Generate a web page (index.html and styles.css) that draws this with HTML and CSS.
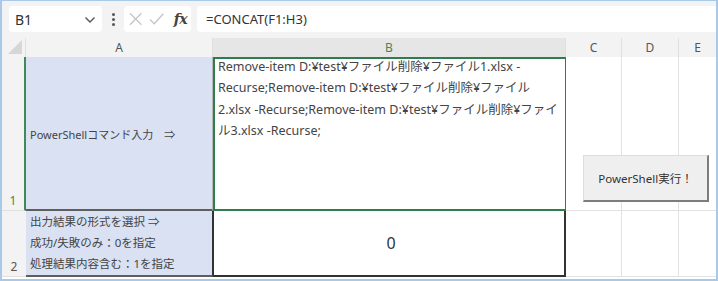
FILE: index.html
```html
<!DOCTYPE html>
<html lang="ja">
<head>
<meta charset="utf-8">
<link rel="stylesheet" href="styles.css">
</head>
<body>
<div class="frame">
  <div class="toolbar">
    <div class="namebox">
      <span class="ref">B1</span>
      <svg class="chev" width="12" height="8" viewBox="0 0 12 8"><path d="M1.5 1.5 L6 6 L10.5 1.5" fill="none" stroke="#555" stroke-width="1.4"/></svg>
    </div>
    <div class="dots"><i></i><i></i><i></i></div>
    <div class="iconbox">
      <svg width="14" height="14" viewBox="0 0 14 14"><path d="M1 1 L13 13 M13 1 L1 13" stroke="#c4c4c4" stroke-width="1.3" fill="none"/></svg>
      <svg width="16" height="14" viewBox="0 0 16 14"><path d="M1 7.5 L5.5 12 L15 1.5" stroke="#c4c4c4" stroke-width="1.3" fill="none"/></svg>
      <span class="fx">fx</span>
    </div>
    <div class="formula">=CONCAT(F1:H3)</div>
  </div>
  <div class="sheet">
    <div class="corner"><svg width="14" height="14" viewBox="0 0 14 14"><path d="M14 0 L14 14 L0 14 Z" fill="#d6d6d6"/></svg></div>
    <div class="colh">A</div>
    <div class="colh sel">B</div>
    <div class="colh">C</div>
    <div class="colh">D</div>
    <div class="colh last">E</div>

    <div class="rowh sel">1</div>
    <div class="cell a a1">PowerShellコマンド入力　⇒</div>
    <div class="cell b1"><div class="b1text">Remove-item D:¥test¥ファイル削除¥ファイル1.xlsx -<br>Recurse;Remove-item D:¥test¥ファイル削除¥ファイル<br>2.xlsx -Recurse;Remove-item D:¥test¥ファイル削除¥ファイ<br>ル3.xlsx -Recurse;</div></div>
    <div class="cell"></div>
    <div class="cell"></div>
    <div class="cell last"></div>

    <div class="rowh">2</div>
    <div class="cell a a2">出力結果の形式を選択 ⇒<br>成功/失敗のみ：0を指定<br>処理結果内容含む：1を指定</div>
    <div class="cell b2">0</div>
    <div class="cell"></div>
    <div class="cell"></div>
    <div class="cell last"></div>

    <button class="runbtn">PowerShell実行！</button>
  </div>
</div>
</body>
</html>
```
FILE: styles.css
```css
* { box-sizing: border-box; }
html, body { margin: 0; padding: 0; }
body {
  width: 718px;
  height: 281px;
  overflow: hidden;
  font-family: "Noto Sans", "Noto Sans CJK JP", sans-serif;
  color: #333;
}
.frame {
  width: 718px;
  height: 281px;
  border: 2px solid #a9c9e9;
  border-top-width: 1px;
  background: #f3f3f3;
  display: flex;
  flex-direction: column;
}
.toolbar {
  height: 37px;
  display: flex;
  align-items: flex-start;
  padding: 5px 0 0 7px;
}
.namebox {
  width: 93px;
  height: 26px;
  background: #fff;
  border-radius: 4px;
  display: flex;
  align-items: center;
  justify-content: space-between;
  padding: 0 6px;
}
.ref { font-size: 14px; color: #333; padding-top: 1px; }
.chev { margin-top: 1px; }
.dots {
  width: 22px;
  height: 26px;
  display: flex;
  flex-direction: column;
  align-items: center;
  justify-content: center;
  gap: 2px;
}
.dots i {
  display: block;
  width: 3px;
  height: 3px;
  border-radius: 50%;
  background: #555;
}
.iconbox {
  width: 67px;
  height: 26px;
  background: #fff;
  border-radius: 4px;
  display: flex;
  align-items: center;
  padding: 0 4px 0 5px;
  gap: 7px;
}
.fx {
  font-family: "DejaVu Serif", "Liberation Serif", serif;
  font-style: italic;
  font-weight: bold;
  font-size: 14px;
  color: #444;
  margin-left: 2px;
  letter-spacing: -0.5px;
}
.formula {
  flex: 1;
  height: 26px;
  margin-left: 6px;
  background: #fff;
  border-radius: 4px 0 0 4px;
  font-size: 13px;
  line-height: 27px;
  padding-left: 9px;
  color: #333;
}
.sheet {
  position: relative;
  flex: 1;
  display: grid;
  grid-template-columns: 24px 187px 353px 56px 57px 1fr;
  grid-template-rows: 19px 154px 66px 1fr;
  background: #fff;
}
.corner {
  background: #f3f3f3;
  display: flex;
  align-items: flex-end;
  justify-content: flex-end;
  padding: 0 3px 3px 0;
  border-right: 1px solid #e0e0e0;
}
.colh {
  background: #f3f3f3;
  font-size: 12px;
  color: #555;
  text-align: center;
  line-height: 19px;
  border-right: 1px solid #e0e0e0;
}
.colh.sel { background: #e6e6e6; color: #3e8a5a; }
.colh.last { border-right: none; }
.rowh {
  background: #f3f3f3;
  font-size: 12px;
  color: #555;
  display: flex;
  align-items: flex-end;
  justify-content: center;
  padding-bottom: 1px;
  border-bottom: 1px solid #e0e0e0;
}
.rowh.sel { color: #3e8a5a; border-right: 2px solid #3e8a5a; }
.cell {
  border-right: 1px solid #e2e2e2;
  border-bottom: 1px solid #e2e2e2;
  font-size: 12.5px;
}
.cell.last { border-right: none; }
.a { background: #d9e1f2; color: #444; }
.a1 {
  display: flex;
  align-items: center;
  font-size: 11px;
  padding-left: 4px;
  padding-top: 2px;
  border-bottom: 2px solid #5e5e5e;
  border-right: 1px solid #b8b8b8;
}
.a2 {
  font-size: 11.5px;
  line-height: 21px;
  padding: 0 0 0 4px;
  border-bottom: 2px solid #5e5e5e;
  border-right: 1px solid #333;
}
.b1 {
  border: 2px solid #2f7d4c;
  border-right-width: 1px;
  padding: 0 0 0 3px;
  color: #444;
}
.b1text {
  margin-top: -3px;
  font-size: 12.5px;
  line-height: 21.3px;
}
.b2 {
  border: 2px solid #333;
  border-top: none;
  border-left: 1px solid #333;
  font-size: 16px;
  color: #333;
  display: flex;
  align-items: center;
  justify-content: center;
  padding-left: 4px;
}
.runbtn {
  position: absolute;
  left: 581px;
  top: 117px;
  width: 126px;
  height: 47px;
  background: #efefef;
  border: 1px solid #dcdcdc;
  border-right: 2px solid #7d7d7d;
  border-bottom: 2px solid #7d7d7d;
  font-family: "Noto Sans", "Noto Sans CJK JP", sans-serif;
  font-size: 11.5px;
  color: #333;
  padding: 0;
}
```
